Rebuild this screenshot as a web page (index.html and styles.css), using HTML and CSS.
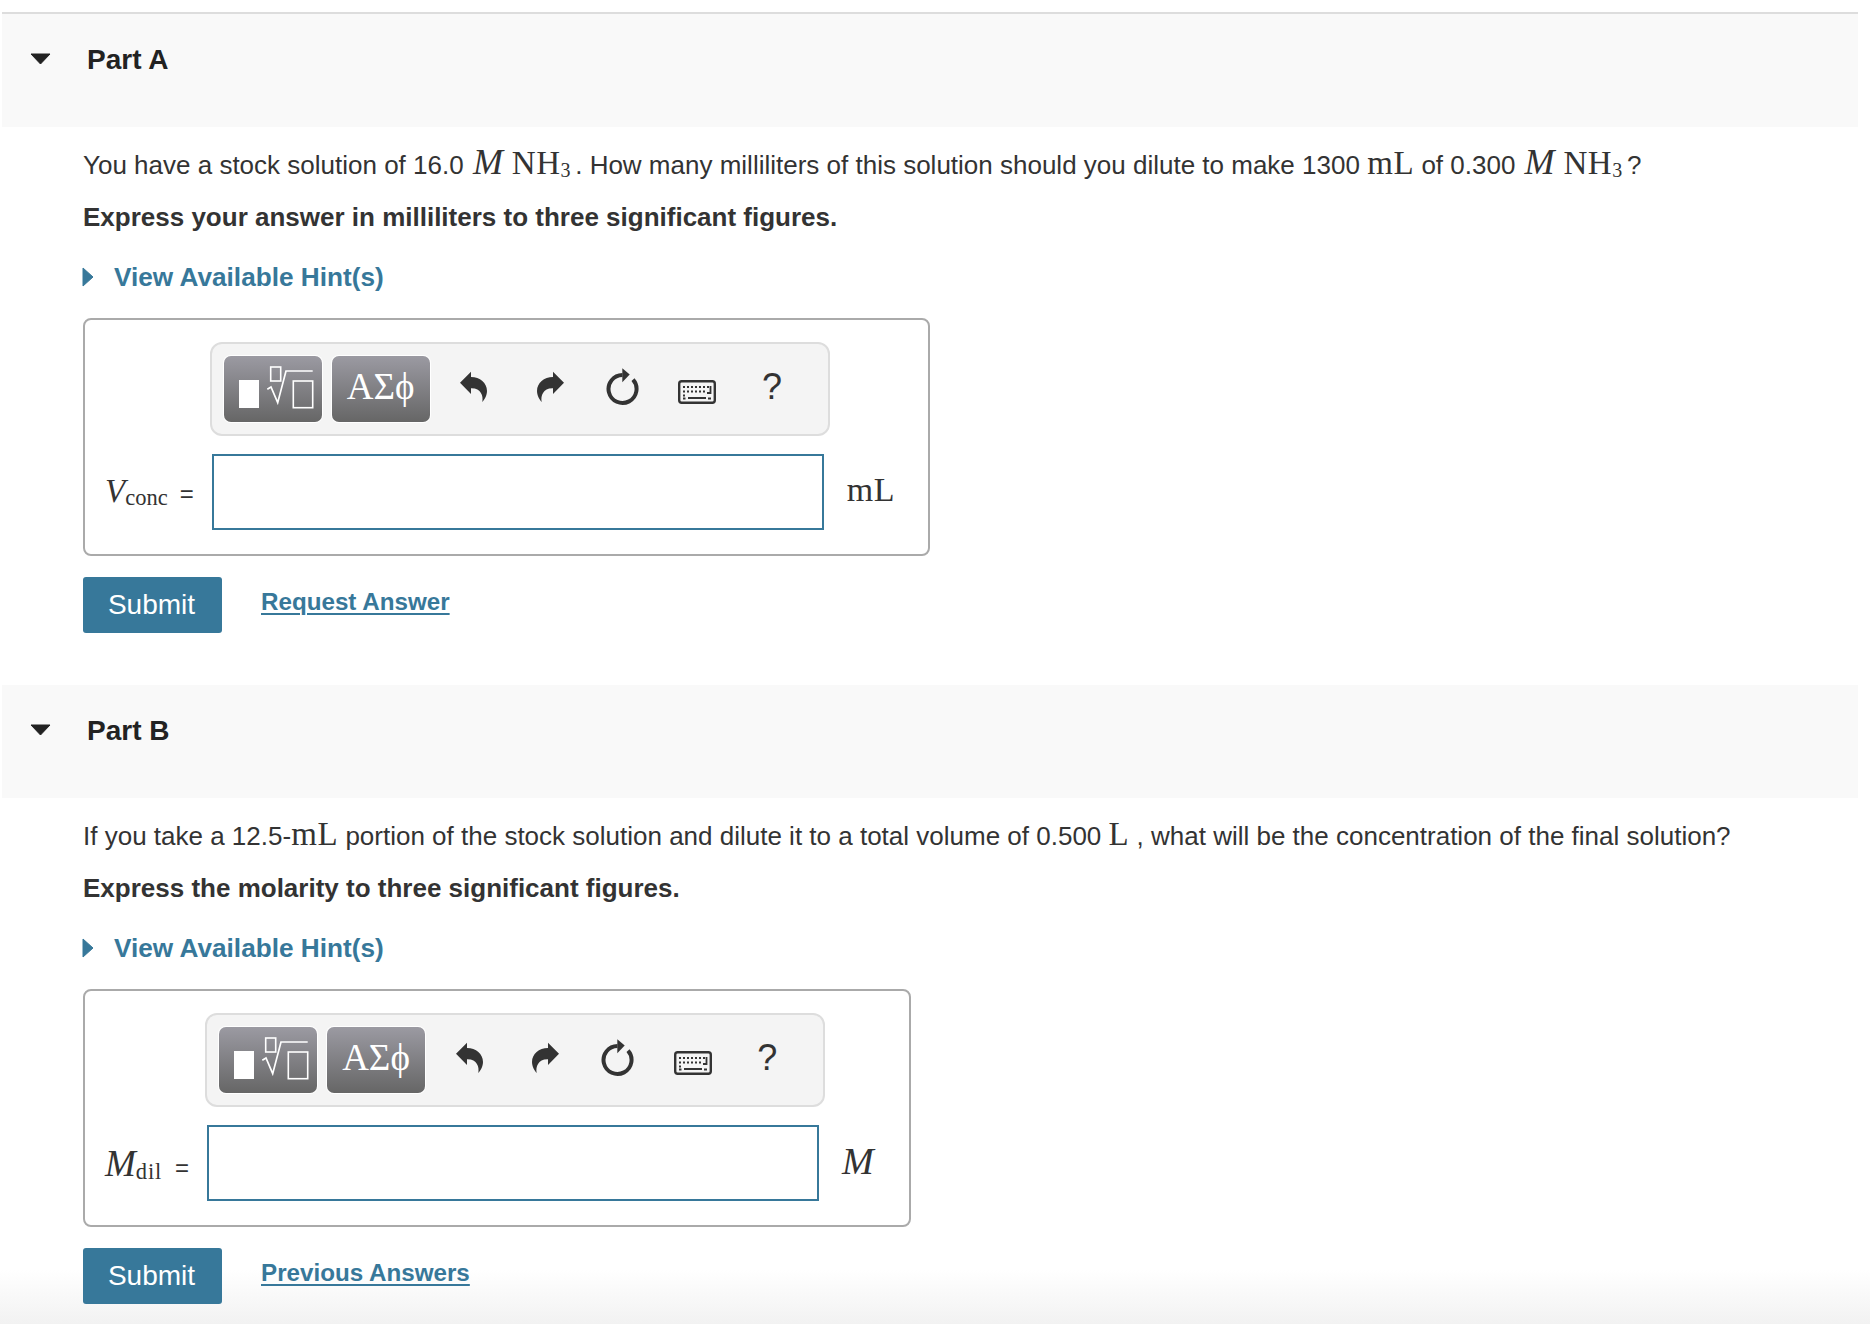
FILE: index.html
```html
<!DOCTYPE html>
<html lang="en">
<head>
    <meta charset="UTF-8">
    <title>Dilution - Part A and Part B</title>
    <link rel="stylesheet" href="styles.css">
</head>
<body>
    <svg class="icon-defs" width="0" height="0">
        <defs>
            <symbol id="undo" viewBox="0 0 27 31">
                <path d="M0 11.7 L11 .7 V6 C20 6 27 12 27 20 C27 25 24 29 22.3 31 C23.5 25 21 17 11 17.3 V23 Z"/>
            </symbol>
            <symbol id="redo" viewBox="0 0 27 31">
                <path transform="translate(27 0) scale(-1 1)" d="M0 11.7 L11 .7 V6 C20 6 27 12 27 20 C27 25 24 29 22.3 31 C23.5 25 21 17 11 17.3 V23 Z"/>
            </symbol>
            <symbol id="reset" viewBox="0 0 34 38">
                <path d="M16.5 7 A14 14 0 1 0 27 11.7" fill="none" stroke="#333" stroke-width="4"/>
                <path d="M16.3 .3 L23.7 6.5 L16.3 14.3 Z"/>
            </symbol>
            <symbol id="keyboard" viewBox="0 0 38 24">
                <rect x="1.2" y="1.2" width="35.6" height="21.6" rx="2.5" fill="none" stroke="#333" stroke-width="2.4"/>
                <path d="M5 7 H31 M5 11.5 H27 M5 15.5 H7" fill="none" stroke="#333" stroke-width="1.8" stroke-dasharray="2 2"/>
                <path d="M32.5 6 V13 H29 M10 18 H28 M5 18.5 H7.5 M30 18.5 H33" fill="none" stroke="#333" stroke-width="1.8"/>
            </symbol>
            <symbol id="templates" viewBox="0 0 98 66">
                <rect x="15" y="24" width="20" height="28" fill="#fff"/>
                <rect x="46.7" y="11" width="10" height="14" fill="none" stroke="#fff" stroke-width="1.6"/>
                <path d="M43.3 33.3 L47 31 L53.7 46.7 L62 15 H88.7" fill="none" stroke="#fff" stroke-width="1.7"/>
                <rect x="69.3" y="25" width="19.4" height="26.7" fill="none" stroke="#fff" stroke-width="1.6"/>
            </symbol>
        </defs>
    </svg>

    <!-- Part A -->
    <section class="part">
        <div class="part-header">
            <svg class="caret-down" viewBox="0 0 21 12"><path d="M1 1 H20 L10.5 11 Z"/></svg>
            <h2>Part A</h2>
        </div>
        <div class="part-body">
            <p class="question">You have a stock solution of 16.0 <span class="math mi">M</span> <span class="math sub-end">NH<sub>3</sub></span>. How many milliliters of this solution should you dilute to make 1300 <span class="math">mL</span> of 0.300 <span class="math mi">M</span> <span class="math sub-end">NH<sub>3</sub></span>?</p>
            <p class="instruction">Express your answer in milliliters to three significant figures.</p>
            <a class="hint" href="#"><svg class="caret-right" viewBox="0 0 12 20"><path d="M1 1 L11 10 L1 19 Z"/></svg>View Available Hint(s)</a>

            <div class="answer-box">
                <div class="toolbar">
                    <button class="tool-btn" type="button"><svg width="98" height="66"><use href="#templates"/></svg></button>
                    <button class="tool-btn symbols" type="button">ΑΣϕ</button>
                    <span class="tool-icon first"><svg width="27" height="31"><use href="#undo"/></svg></span>
                    <span class="tool-icon redo"><svg width="27" height="31"><use href="#redo"/></svg></span>
                    <span class="tool-icon"><svg width="34" height="38"><use href="#reset"/></svg></span>
                    <span class="tool-icon"><svg class="kbd" width="38" height="24"><use href="#keyboard"/></svg></span>
                    <span class="tool-icon help">?</span>
                </div>
                <div class="answer-label"><span class="var">V</span><span class="var-sub">conc</span><span class="equals">=</span></div>
                <input class="answer-input" type="text">
                <div class="unit">mL</div>
            </div>

            <div class="actions">
                <button class="submit" type="button">Submit</button>
                <a class="action-link" href="#">Request Answer</a>
            </div>
        </div>
    </section>

    <!-- Part B -->
    <section class="part">
        <div class="part-header">
            <svg class="caret-down" viewBox="0 0 21 12"><path d="M1 1 H20 L10.5 11 Z"/></svg>
            <h2>Part B</h2>
        </div>
        <div class="part-body">
            <p class="question">If you take a 12.5-<span class="math">mL</span> portion of the stock solution and dilute it to a total volume of 0.500 <span class="math">L</span> , what will be the concentration of the final solution?</p>
            <p class="instruction">Express the molarity to three significant figures.</p>
            <a class="hint" href="#"><svg class="caret-right" viewBox="0 0 12 20"><path d="M1 1 L11 10 L1 19 Z"/></svg>View Available Hint(s)</a>

            <div class="answer-box">
                <div class="toolbar">
                    <button class="tool-btn" type="button"><svg width="98" height="66"><use href="#templates"/></svg></button>
                    <button class="tool-btn symbols" type="button">ΑΣϕ</button>
                    <span class="tool-icon first"><svg width="27" height="31"><use href="#undo"/></svg></span>
                    <span class="tool-icon redo"><svg width="27" height="31"><use href="#redo"/></svg></span>
                    <span class="tool-icon"><svg width="34" height="38"><use href="#reset"/></svg></span>
                    <span class="tool-icon"><svg class="kbd" width="38" height="24"><use href="#keyboard"/></svg></span>
                    <span class="tool-icon help">?</span>
                </div>
                <div class="answer-label"><span class="var var-wide">M</span><span class="var-sub var-sub-wide">dil</span><span class="equals">=</span></div>
                <input class="answer-input" type="text">
                <div class="unit unit-var">M</div>
            </div>

            <div class="actions">
                <button class="submit" type="button">Submit</button>
                <a class="action-link" href="#">Previous Answers</a>
            </div>
        </div>
    </section>
</body>
</html>
```

FILE: styles.css
```css
html {
    height: 100%;
}
body {
    font-family: "Liberation Sans", sans-serif;
    margin: 0;
    padding: 12px 12px 0 2px;
    color: #333;
    background: linear-gradient(#fff, #f2f2f2) bottom / 100% 54px no-repeat;
    background-color: #fff;
}
.icon-defs {
    position: absolute;
}
.part {
    padding-bottom: 52px;
}
.part:first-of-type {
    border-top: 2px solid #ddd;
}
.part:last-of-type {
    padding-bottom: 0;
}
.part-header {
    display: flex;
    align-items: center;
    height: 113px;
    padding-bottom: 21px;
    box-sizing: border-box;
    background-color: #f9f9f9;
}
.part-header h2 {
    margin: 0;
    font-size: 28px;
    line-height: 32px;
    color: #222;
}
.caret-down {
    width: 21px;
    height: 12px;
    margin: 0 36px 2px 28px;
    fill: #222;
    stroke: #222;
    stroke-linejoin: round;
}
.part-body {
    padding: 20px 0 0 81px;
}
.question {
    height: 36px;
    margin: 0;
    font-size: 26px;
    line-height: 36px;
    white-space: nowrap;
}
.instruction {
    margin: 16px 0 0;
    font-size: 26px;
    line-height: 36px;
    font-weight: bold;
}
.math {
    font-family: "Liberation Serif", serif;
    font-size: 33px;
    line-height: 0;
    letter-spacing: 0.6px;
}
.math sub {
    font-size: 20px;
    line-height: 0;
    vertical-align: -3px;
}
.sub-end {
    margin-right: 4px;
}
.mi {
    margin: 0 1px 0 2px;
    font-style: italic;
    font-size: 36px;
}
.hint {
    display: flex;
    align-items: center;
    height: 36px;
    margin: 24px 0 0 -1px;
    font-size: 26.2px;
    line-height: 36px;
    font-weight: bold;
    color: #37789a;
    text-decoration: none;
}
.caret-right {
    width: 12px;
    height: 20px;
    margin-right: 20px;
    fill: #37789a;
    stroke: #37789a;
    stroke-linejoin: round;
}
.answer-box {
    display: grid;
    grid-template-columns: auto 612px auto;
    width: fit-content;
    margin-top: 23px;
    padding: 22px 33px 24px 20px;
    border: 2px solid #aaa;
    border-radius: 8px;
    row-gap: 18px;
    align-items: center;
}
.toolbar {
    grid-column: 2 / 4;
    display: flex;
    align-items: center;
    box-sizing: border-box;
    width: 620px;
    height: 94px;
    margin-left: -2px;
    padding-left: 12px;
    border: 2px solid #ddd;
    border-radius: 12px;
    background-color: #f4f4f4;
}
.tool-btn {
    display: flex;
    flex: none;
    align-items: center;
    justify-content: center;
    width: 98px;
    height: 66px;
    margin-right: 10px;
    padding: 0;
    border: 0;
    border-radius: 7px;
    box-shadow: 0 0 0 1px #fff;
    background: linear-gradient(#9b9aa2, #666);
}
.symbols {
    padding-bottom: 5px;
    font-family: "Liberation Serif", serif;
    font-size: 37px;
    color: #fff;
}
.tool-icon {
    display: flex;
    flex: none;
    box-sizing: border-box;
    align-items: center;
    justify-content: center;
    width: 74.5px;
    margin-bottom: 5px;
    fill: #333;
}
.tool-icon.first {
    margin-left: -3px;
}
.tool-icon.redo {
    padding-left: 4px;
}
.kbd {
    margin-top: 10px;
}
.help {
    font-size: 36px;
    color: #333;
}
.answer-label {
    font-family: "Liberation Serif", serif;
    white-space: nowrap;
    color: #333;
}
.var {
    font-size: 33px;
    font-style: italic;
}
.var-wide {
    font-size: 37px;
}
.var-sub {
    font-size: 22.5px;
    vertical-align: -3px;
}
.var-sub-wide {
    margin-right: 1px;
    letter-spacing: 0.8px;
}
.equals {
    margin: 0 18px 0 12px;
    font-family: "Liberation Sans", sans-serif;
    font-size: 24px;
}
.answer-input {
    box-sizing: border-box;
    width: 612px;
    height: 76px;
    border: 2px solid #37789a;
    border-radius: 0;
    outline: none;
}
.unit {
    margin: 0 0 4px 23px;
    font-family: "Liberation Serif", serif;
    font-size: 34px;
    letter-spacing: 0.6px;
}
.unit-var {
    margin-right: 2px;
    font-size: 38px;
    font-style: italic;
}
.actions {
    display: flex;
    margin-top: 21px;
}
.submit {
    width: 139px;
    height: 56px;
    padding: 0 2px 0 0;
    border: 0;
    border-radius: 3px;
    font-family: "Liberation Sans", sans-serif;
    font-size: 28px;
    color: #fff;
    background-color: #37789a;
}
.action-link {
    height: 36px;
    margin: 7px 0 0 39px;
    font-size: 24.2px;
    line-height: 36px;
    font-weight: bold;
    color: #37789a;
    text-decoration-thickness: 2px;
    text-underline-offset: 3px;
}
```
